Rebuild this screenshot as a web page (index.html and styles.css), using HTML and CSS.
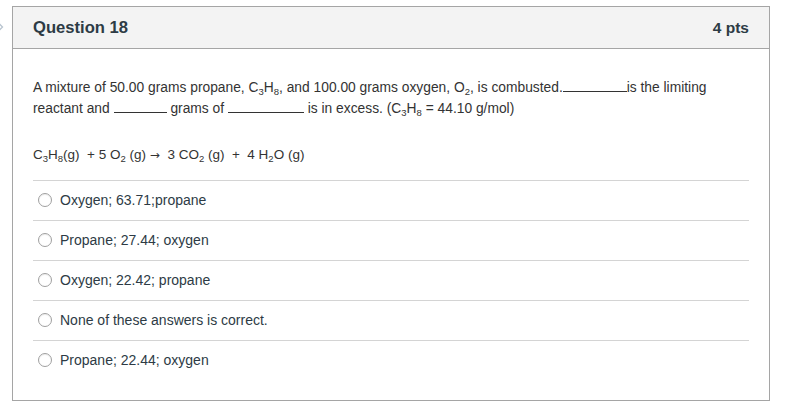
FILE: index.html
```html
<!DOCTYPE html>
<html>
<head>
<meta charset="utf-8">
<link rel="stylesheet" href="styles.css">
</head>
<body>
<div class="page">
  <svg class="chev" width="6" height="10" viewBox="0 0 6 10"><path d="M0.5 1 L4.5 5 L0.5 9" fill="none" stroke="#b8c4cf" stroke-width="1.3"/></svg>
  <div class="question">
    <div class="header">
      <div class="title">Question 18</div>
      <div class="pts">4 pts</div>
    </div>
    <div class="body">
      <p class="text">A mixture of 50.00 grams propane, C<sub>3</sub>H<sub>8</sub>, and 100.00 grams oxygen, O<sub>2</sub>, is combusted.<span class="blank b1"></span>is the limiting reactant and <span class="blank b2"></span> grams of <span class="blank b3"></span> is in excess. (C<sub>3</sub>H<sub>8</sub> = 44.10 g/mol)</p>
      <p class="eq">C<sub>3</sub>H<sub>8</sub>(g) &nbsp;+ 5 O<sub>2</sub> (g) <span class="arrow">&rarr;</span> &nbsp;3 CO<sub>2</sub> (g) &nbsp;+ &nbsp;4 H<sub>2</sub>O (g)</p>
      <div class="answers">
        <label class="answer"><span class="radio"></span><span>Oxygen; 63.71;propane</span></label>
        <label class="answer"><span class="radio"></span><span>Propane; 27.44; oxygen</span></label>
        <label class="answer"><span class="radio"></span><span>Oxygen; 22.42; propane</span></label>
        <label class="answer"><span class="radio"></span><span>None of these answers is correct.</span></label>
        <label class="answer"><span class="radio"></span><span>Propane; 22.44; oxygen</span></label>
      </div>
    </div>
  </div>
</div>
</body>
</html>
```
FILE: styles.css
```css
html, body {
  margin: 0;
  padding: 0;
  background: #fff;
}
.page {
  position: relative;
  padding: 6px 0 0 12px;
}
.chev {
  position: absolute;
  left: -2px;
  top: 22px;
}
.question {
  width: 756px;
  border: 1px solid #a5a5a5;
  font-family: "Liberation Sans", Arial, sans-serif;
  color: #2d3b45;
}
.header {
  display: flex;
  justify-content: space-between;
  align-items: center;
  height: 41px;
  padding: 0 20px;
  background: #f3f3f3;
  border-bottom: 1px solid #a5a5a5;
  font-weight: bold;
}
.title {
  font-size: 16.6px;
  padding-top: 1px;
}
.pts {
  font-size: 15.5px;
}
.body {
  padding: 28px 20px 20px 20px;
}
.text {
  margin: 0;
  font-size: 13.8px;
  line-height: 21px;
  color: #333;
}
.eq {
  margin: 26px 0 0 0;
  font-size: 13.5px;
  line-height: 20px;
  color: #333;
}
.arrow {
  font-family: "DejaVu Sans", sans-serif;
  font-size: 12px;
}
sub {
  font-size: 9.5px;
  vertical-align: -3px;
  line-height: 0;
}
.blank {
  display: inline-block;
  border-bottom: 1px solid #333;
  height: 12px;
  vertical-align: baseline;
}
.b1 { width: 64px; }
.b2 { width: 53px; }
.b3 { width: 76px; }
.answers {
  margin-top: 15px;
  width: 716px;
}
.answer {
  display: flex;
  align-items: center;
  height: 37px;
  padding-bottom: 2px;
  border-top: 1px solid #d4d4d4;
  font-size: 14px;
  color: #2d3b45;
}
.radio {
  width: 12px;
  height: 12px;
  border: 1px solid #a0a0a0;
  border-radius: 50%;
  margin: 0 8px 0 5px;
  background: #fff;
  box-shadow: inset 0 1px 1px rgba(0,0,0,0.08);
}
```
